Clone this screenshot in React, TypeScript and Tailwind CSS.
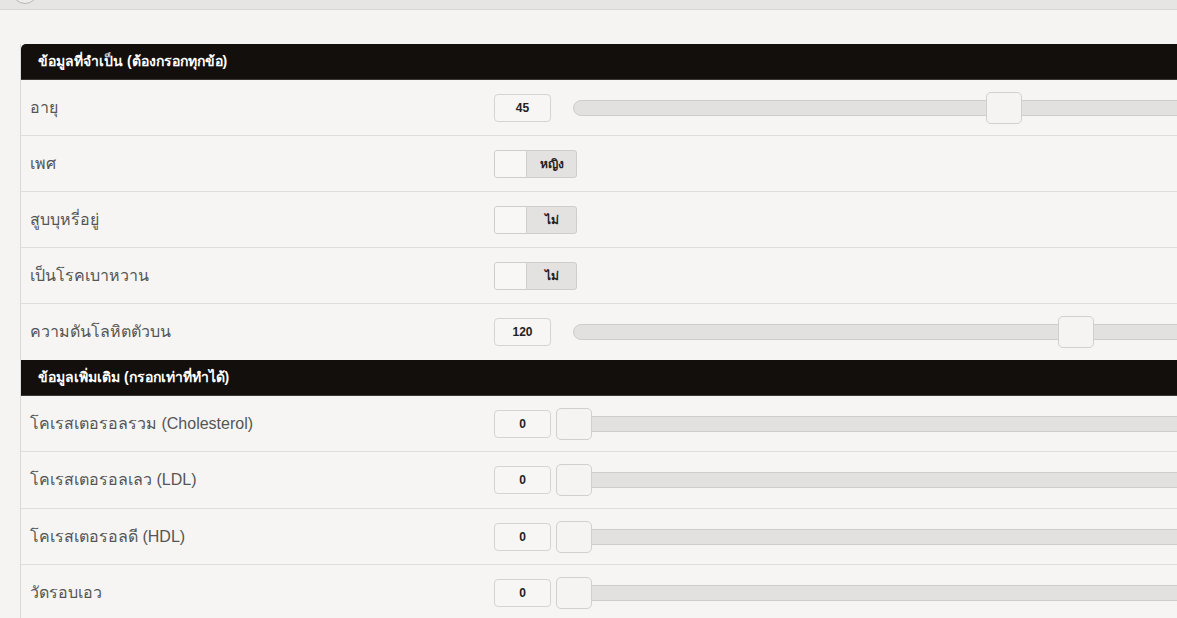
import React from "react";

const font = { fontFamily: '"Liberation Sans", "Noto Sans", "DejaVu Sans", sans-serif' };

function Slider({ value, thumb }: { value: string; thumb: number }) {
  return (
    <div className="flex shrink-0 items-center">
      <div className="flex h-[28px] w-[57px] shrink-0 items-center justify-center rounded-[4px] border border-[#d6d4d2] bg-[#f7f6f5] text-[12px] font-bold text-[#222]">
        {value}
      </div>
      <div className="relative ml-[22px] h-[16px] w-[960px] shrink-0 rounded-l-[8px] border border-[#cfcdcb] bg-[#e3e1df]">
        <div
          className="absolute top-[-9px] h-[32px] w-[36px] rounded-[5px] border border-[#d2d0ce] bg-[#f5f4f3]"
          style={{ left: thumb }}
        />
      </div>
    </div>
  );
}

function Toggle({ label }: { label: string }) {
  return (
    <div className="flex h-[28px] w-[83px] shrink-0 overflow-hidden rounded-[3px] border border-[#cfcdcb] bg-[#e4e2e0]">
      <div className="w-[32px] border-r border-[#cfcdcb] bg-[#f8f7f6]" />
      <div className="flex flex-1 items-center justify-center text-[12px] font-bold text-[#222]">{label}</div>
    </div>
  );
}

function Row({ label, children, h = "h-[56px]", last = false }: { label: string; children: React.ReactNode; h?: string; last?: boolean }) {
  return (
    <div className={`flex items-center ${h} ${last ? "" : "border-b border-[#e0dedc]"} pl-[9px]`}>
      <div className="w-[464px] shrink-0 text-[16px] text-[#555]">{label}</div>
      {children}
    </div>
  );
}

function Header({ text }: { text: string }) {
  return (
    <div className="flex h-[36px] items-center border-b border-[#3a3634] bg-[#130f0c] pl-[17px] text-[14px] font-bold text-white">
      {text}
    </div>
  );
}

export default function App() {
  return (
    <div className="relative h-[618px] w-[1177px] overflow-hidden bg-[#f5f4f3]" style={font}>
      <div className="relative h-[10px] border-b border-[#d9d7d5] bg-[#e7e5e3]">
        <div className="absolute left-[12px] top-[-22px] h-[26px] w-[26px] rounded-full border border-[#b9b7b5] bg-[#eeeceb]" />
      </div>
      <div className="ml-[20px] mt-[34px] w-[1200px] border-l border-[#dcdad8] bg-[#f6f5f4]">
        <div className="overflow-hidden rounded-tl-[5px]">
          <Header text="ข้อมูลที่จำเป็น (ต้องกรอกทุกข้อ)" />
        </div>
        <Row label="อายุ">
          <Slider value="45" thumb={412} />
        </Row>
        <Row label="เพศ">
          <Toggle label="หญิง" />
        </Row>
        <Row label="สูบบุหรี่อยู่">
          <Toggle label="ไม่" />
        </Row>
        <Row label="เป็นโรคเบาหวาน">
          <Toggle label="ไม่" />
        </Row>
        <Row label="ความดันโลหิตตัวบน" h="h-[56px]" last>
          <Slider value="120" thumb={484} />
        </Row>
        <Header text="ข้อมูลเพิ่มเติม (กรอกเท่าที่ทำได้)" />
        <Row label="โคเรสเตอรอลรวม (Cholesterol)" h="h-[56px]">
          <Slider value="0" thumb={-18} />
        </Row>
        <Row label="โคเรสเตอรอลเลว (LDL)" h="h-[57px]">
          <Slider value="0" thumb={-18} />
        </Row>
        <Row label="โคเรสเตอรอลดี (HDL)" h="h-[56px]">
          <Slider value="0" thumb={-18} />
        </Row>
        <Row label="วัดรอบเอว">
          <Slider value="0" thumb={-18} />
        </Row>
      </div>
    </div>
  );
}
